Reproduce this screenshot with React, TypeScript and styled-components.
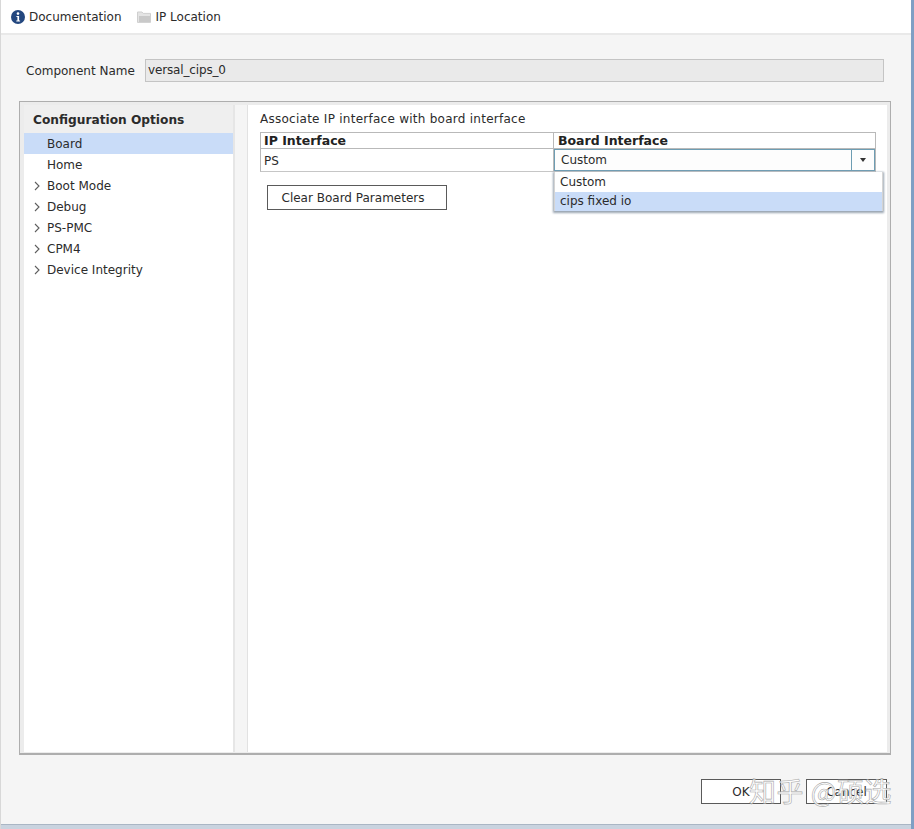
import { createGlobalStyle } from 'styled-components';
import styled from 'styled-components';

const GlobalStyle = createGlobalStyle`
  html, body {
    margin: 0;
    padding: 0;
    background: #fff;
  }
  body {
    font-family: "DejaVu Sans", sans-serif;
    font-size: 12px;
    color: #2b2b2b;
  }
`;

const Dialog = styled.div`
  position: relative;
  width: 914px;
  height: 829px;
  box-sizing: border-box;
  display: flex;
  flex-direction: column;
  overflow: hidden;
  background: #f5f5f5;
  border-left: 1px solid #d8d8d8;
  border-right: 3px solid #7f9fc4;
`;

const Toolbar = styled.div`
  height: 33px;
  flex: none;
  display: flex;
  align-items: center;
  gap: 15px;
  padding-left: 10px;
  background: #fff;
  border-bottom: 2px solid #e9e9e9;
`;

const ToolItem = styled.div`
  display: flex;
  align-items: center;
  gap: 4px;
`;

const FolderItem = styled(ToolItem)`
  gap: 5px;
`;

const NameRow = styled.div`
  flex: none;
  display: flex;
  align-items: center;
  height: 23px;
  margin-top: 24px;
  padding-left: 25px;
`;

const NameLabel = styled.span`
  width: 119px;
`;

const NameInput = styled.div`
  width: 735px;
  height: 21px;
  line-height: 21px;
  padding-left: 2px;
  border: 1px solid #c4c4c4;
  background: #eaeaea;
  letter-spacing: -0.15px;
`;

const Panel = styled.div`
  flex: none;
  width: 872px;
  height: 654px;
  box-sizing: border-box;
  margin: 19px 0 0 18px;
  padding: 3px 3px 1px 4px;
  display: flex;
  background: #ececec;
  border: 1px solid #aeaeae;
  border-bottom-width: 2px;
`;

const Sidebar = styled.div`
  width: 209px;
  flex: none;
  background: #fff;
`;

const SidebarTitle = styled.div`
  height: 28px;
  line-height: 30px;
  padding-left: 9px;
  background: #efefef;
  font-weight: 700;
  font-size: 12.2px;
`;

const TreeRow = styled.div<{ $selected?: boolean }>`
  height: 21px;
  display: flex;
  align-items: center;
  padding-left: 9px;
  background: ${(p) => (p.$selected ? '#c9dcf8' : 'transparent')};
`;

const Caret = styled.span`
  width: 13px;
  padding-left: 1px;
  display: flex;
  align-items: center;
`;

const Gutter = styled.div`
  flex: none;
  width: 15px;
  box-sizing: border-box;
  background: #f5f5f5;
  border-left: 2px solid #e6e6e6;
  border-right: 1px solid #e2e2e2;
`;

const Content = styled.div`
  flex: none;
  width: 639px;
  padding: 6px 12px 0;
  box-sizing: border-box;
  background: #fff;
`;

const Heading = styled.div`
  height: 21px;
  line-height: 17px;
  letter-spacing: 0.26px;
`;

const Table = styled.div`
  position: relative;
  width: 616px;
  box-sizing: border-box;
  border: 1px solid #b9b9b9;
  border-bottom-color: #c6c6c6;
`;

const HeadRow = styled.div`
  height: 15px;
  display: flex;
  border-bottom: 1px solid #b9b9b9;
  font-weight: 700;
  font-size: 12.5px;
  line-height: 16px;
  color: #222;
`;

const BodyRow = styled.div`
  height: 22px;
  display: flex;
  line-height: 24px;
`;

const FirstCell = styled.div`
  width: 293px;
  flex: none;
  padding-left: 3px;
  box-sizing: border-box;
  border-right: 1px solid #b9b9b9;
`;

const SecondCell = styled.div`
  padding-left: 4px;
`;

const Combo = styled.div`
  flex: 1;
  height: 22px;
  box-sizing: border-box;
  display: flex;
  border: 1px solid #6d9db3;
  background: #fdfdfd;
  line-height: 20px;
`;

const ComboText = styled.div`
  flex: 1;
  padding-left: 6px;
`;

const ComboArrow = styled.div`
  width: 22px;
  display: flex;
  align-items: center;
  justify-content: center;
  border-left: 1px solid #6d9db3;
  &::after {
    content: '';
    border-left: 3.5px solid transparent;
    border-right: 3.5px solid transparent;
    border-top: 4px solid #333;
  }
`;

const Popup = styled.div`
  position: absolute;
  left: 293px;
  top: 39px;
  width: 327px;
  background: #fff;
  border-left: 1px solid #d4d4d4;
  border-right: 1px solid #d4d4d4;
  box-shadow: 0 1px 2px 1px #9aa6b2;
  z-index: 2;
`;

const PopupItem = styled.div<{ $selected?: boolean }>`
  height: 19px;
  line-height: 19px;
  padding-left: 5px;
  background: ${(p) => (p.$selected ? '#c9dcf8' : 'transparent')};
  &:first-child {
    height: 20px;
    line-height: 20px;
  }
`;

const PlainButton = styled.div<{ $width: number }>`
  width: ${(p) => p.$width}px;
  height: 25px;
  box-sizing: border-box;
  display: flex;
  align-items: center;
  justify-content: center;
  border: 1px solid #5a5a5a;
  background: #fff;
  color: #2b2b2b;
`;

const ClearButton = styled(PlainButton)`
  margin: 13px 0 0 7px;
  padding-right: 8px;
`;

const Footer = styled.div`
  flex: none;
  display: flex;
  gap: 25px;
  padding: 24px 0 0 700px;
`;

const BottomEdge = styled.div`
  position: absolute;
  left: 0;
  right: 0;
  bottom: 0;
  height: 4px;
  background: #c9d3df;
  border-top: 1px solid #aab6c4;
`;

const Watermark = styled.div`
  position: absolute;
  left: 748px;
  top: 773px;
  font-family: "Noto Sans CJK SC", sans-serif;
  font-size: 27px;
  letter-spacing: 0.6px;
  line-height: 36px;
  white-space: nowrap;
  color: #fff;
  opacity: 0.9;
  -webkit-text-stroke: 0.6px #a0a0a0;
`;

const InfoIcon = () => (
  <svg width="14" height="14" viewBox="0 0 14 14">
    <circle cx="7" cy="7" r="7" fill="#23477f" />
    <circle cx="7" cy="3.6" r="1.3" fill="#fff" />
    <path d="M5.4 6h2.7v4.4h1v1.1H5.3v-1.1h1.1V7.1h-1z" fill="#fff" />
  </svg>
);

const FolderIcon = () => (
  <svg width="14" height="12" viewBox="0 0 14 12">
    <path d="M0.5 1h4.5l1.2 1.4h7.3v9H0.5z" fill="#e4e4e4" stroke="#cfcfcf" />
    <rect x="2" y="5" width="11" height="6" fill="#c9c9c9" />
  </svg>
);

const ChevronIcon = () => (
  <svg width="6" height="10" viewBox="0 0 6 10">
    <path d="M1 1l4 4-4 4" fill="none" stroke="#5e5e5e" strokeWidth="1.1" />
  </svg>
);

const treeItems = [
  { label: 'Board', selected: true },
  { label: 'Home' },
  { label: 'Boot Mode', expandable: true },
  { label: 'Debug', expandable: true },
  { label: 'PS-PMC', expandable: true },
  { label: 'CPM4', expandable: true },
  { label: 'Device Integrity', expandable: true },
];

export default function App() {
  return (
    <Dialog>
      <GlobalStyle />
      <Toolbar>
        <ToolItem>
          <InfoIcon />
          Documentation
        </ToolItem>
        <FolderItem>
          <FolderIcon />
          IP Location
        </FolderItem>
      </Toolbar>

      <NameRow>
        <NameLabel>Component Name</NameLabel>
        <NameInput>versal_cips_0</NameInput>
      </NameRow>

      <Panel>
        <Sidebar>
          <SidebarTitle>Configuration Options</SidebarTitle>
          {treeItems.map((item) => (
            <TreeRow key={item.label} $selected={item.selected}>
              <Caret>{item.expandable && <ChevronIcon />}</Caret>
              {item.label}
            </TreeRow>
          ))}
        </Sidebar>
        <Gutter />
        <Content>
          <Heading>Associate IP interface with board interface</Heading>
          <Table>
            <HeadRow>
              <FirstCell>IP Interface</FirstCell>
              <SecondCell>Board Interface</SecondCell>
            </HeadRow>
            <BodyRow>
              <FirstCell>PS</FirstCell>
              <Combo>
                <ComboText>Custom</ComboText>
                <ComboArrow />
              </Combo>
            </BodyRow>
            <Popup>
              <PopupItem>Custom</PopupItem>
              <PopupItem $selected>cips fixed io</PopupItem>
            </Popup>
          </Table>
          <ClearButton $width={180}>Clear Board Parameters</ClearButton>
        </Content>
      </Panel>

      <Footer>
        <PlainButton $width={80}>OK</PlainButton>
        <PlainButton $width={81}>Cancel</PlainButton>
      </Footer>

      <BottomEdge />
      <Watermark>知乎 @硕选</Watermark>
    </Dialog>
  );
}
